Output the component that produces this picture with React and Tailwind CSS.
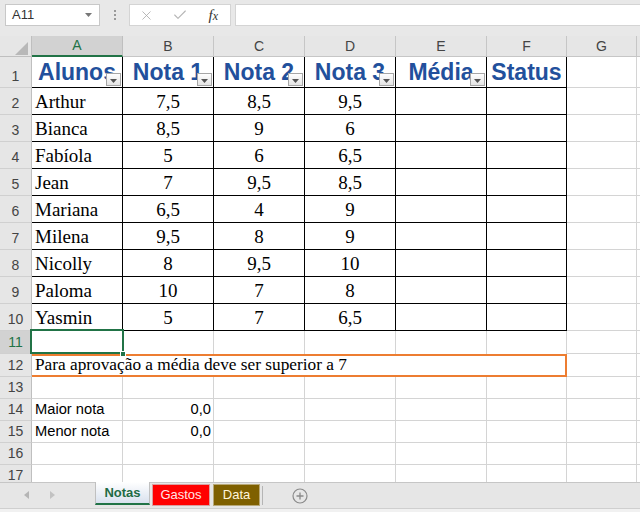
import React from "react";
import { X, Check } from "lucide-react";

const SANS = "font-['Liberation_Sans',Arial,sans-serif]";
const SERIF = "font-['Liberation_Serif','Times_New_Roman',serif]";

const data = [
  ["Arthur", "7,5", "8,5", "9,5"],
  ["Bianca", "8,5", "9", "6"],
  ["Fabíola", "5", "6", "6,5"],
  ["Jean", "7", "9,5", "8,5"],
  ["Mariana", "6,5", "4", "9"],
  ["Milena", "9,5", "8", "9"],
  ["Nicolly", "8", "9,5", "10"],
  ["Paloma", "10", "7", "8"],
  ["Yasmin", "5", "7", "6,5"],
];

const WA = "w-[91px]";
const WF = "w-[80px]";
const WG = "w-[70px]";

function RowHead({ n, sel }) {
  return (
    <div
      className={
        "w-[32px] shrink-0 border-r border-b border-r-[#bfbfbf] border-b-[#d0d0d0] flex items-end justify-center pb-[2px] text-[14px] leading-[17px] " +
        SANS +
        (sel ? " bg-[#d2d2d2] text-[#217346]" : " bg-[#e6e6e6] text-[#444]")
      }
    >
      {n}
    </div>
  );
}

function Gray({ w, children, className = "" }) {
  return (
    <div className={w + " shrink-0 border-r border-b border-[#d4d4d4] " + className}>{children}</div>
  );
}

function FilterBtn() {
  return (
    <div className="absolute right-[1px] bottom-[1px] w-[15px] h-[13px] border border-[#a6a6a6] bg-gradient-to-b from-[#ffffff] to-[#e4e4e4] flex items-end justify-center pb-[2px]">
      <svg width="7" height="4" viewBox="0 0 7 4">
        <polygon points="0,0 7,0 3.5,4" fill="#555" />
      </svg>
    </div>
  );
}

function HeadCell({ w, text, filter }) {
  return (
    <div
      className={
        w +
        " shrink-0 relative border-r border-b border-black overflow-hidden flex items-end justify-center pb-[1px]"
      }
    >
      <span
        className={
          "text-[23px] font-bold leading-[27px] text-[#22509c] whitespace-nowrap " + SANS
        }
      >
        {text}
      </span>
      {filter && <FilterBtn />}
    </div>
  );
}

function DataCell({ w, children, left }) {
  return (
    <div
      className={
        w +
        " shrink-0 border-r border-b border-black flex items-end pb-[1px] text-[19px] leading-[22px] text-black whitespace-nowrap " +
        SERIF +
        (left ? " justify-start pl-[3px]" : " justify-center")
      }
    >
      {children}
    </div>
  );
}

export default function App() {
  return (
    <div className="w-[640px] h-[512px] overflow-hidden flex flex-col bg-white select-none">
      {/* formula bar */}
      <div className="h-[36px] shrink-0 bg-[#e8e8e8] flex items-start pt-[4px]">
        <div className="ml-[5px] w-[95px] h-[22px] bg-white border border-[#c8c8c8] flex items-center justify-between pl-[6px] pr-[7px]">
          <span className={"text-[13px] text-[#333] " + SANS}>A11</span>
          <svg width="7" height="4" viewBox="0 0 7 4">
            <polygon points="0,0 7,0 3.5,4" fill="#777" />
          </svg>
        </div>
        <div className="w-[29px] h-[22px] flex flex-col items-center justify-center gap-[2px]">
          <div className="w-[2px] h-[2px] bg-[#999]" />
          <div className="w-[2px] h-[2px] bg-[#999]" />
          <div className="w-[2px] h-[2px] bg-[#999]" />
        </div>
        <div className="w-[102px] h-[22px] bg-white border border-[#d4d4d4] flex items-center">
          <div className="w-[34px] flex justify-center">
            <X size={15} strokeWidth={1.3} color="#a9a9a9" />
          </div>
          <div className="w-[34px] flex justify-center">
            <Check size={16} strokeWidth={1.6} color="#b5b5b5" />
          </div>
          <div className={"w-[34px] flex justify-center italic text-[15px] text-[#333] " + SERIF}>
            <span>
              f<span className="text-[12px]">x</span>
            </span>
          </div>
        </div>
        <div className="ml-[4px] flex-1 h-[22px] bg-white border border-[#d4d4d4] border-r-0" />
      </div>

      {/* column headers */}
      <div className={"h-[21px] shrink-0 flex bg-[#e6e6e6] text-[14px] text-[#444] " + SANS}>
        <div className="w-[32px] shrink-0 border-r border-b border-[#bfbfbf] relative">
          <svg className="absolute left-0 top-0" width="31" height="20" viewBox="0 0 31 20">
            <polygon points="28,6 28,19 15,19" fill="#b8b8b8" />
          </svg>
        </div>
        <div className="w-[91px] shrink-0 border-r border-[#bfbfbf] border-b-2 border-b-[#217346] bg-[#d2d2d2] text-[#217346] flex items-center justify-center">
          A
        </div>
        {["B", "C", "D", "E"].map((c) => (
          <div key={c} className="w-[91px] shrink-0 border-r border-b border-[#c6c6c6] flex items-center justify-center">
            {c}
          </div>
        ))}
        <div className="w-[80px] shrink-0 border-r border-b border-[#c6c6c6] flex items-center justify-center">F</div>
        <div className="w-[70px] shrink-0 border-r border-b border-[#c6c6c6] flex items-center justify-center">G</div>
        <div className="flex-1 border-b border-[#c6c6c6]" />
      </div>

      {/* grid */}
      <div className="flex-1 overflow-hidden">
        {/* row 1 */}
        <div className="h-[31px] flex">
          <RowHead n="1" />
          <HeadCell w={WA} text="Alunos" filter />
          <HeadCell w={WA} text="Nota 1" filter />
          <HeadCell w={WA} text="Nota 2" filter />
          <HeadCell w={WA} text="Nota 3" filter />
          <HeadCell w={WA} text="Média" filter />
          <HeadCell w={WF} text="Status" />
          <Gray w={WG} />
          <Gray w="flex-1" className="border-r-0" />
        </div>

        {data.map((r, i) => (
          <div key={i} className="h-[27px] flex">
            <RowHead n={String(i + 2)} />
            <DataCell w={WA} left>
              {r[0]}
            </DataCell>
            <DataCell w={WA}>{r[1]}</DataCell>
            <DataCell w={WA}>{r[2]}</DataCell>
            <DataCell w={WA}>{r[3]}</DataCell>
            <DataCell w={WA} />
            <DataCell w={WF} />
            <Gray w={WG} />
            <Gray w="flex-1" className="border-r-0" />
          </div>
        ))}

        {/* row 11 */}
        <div className="h-[23px] flex">
          <RowHead n="11" sel />
          <div className="w-[91px] shrink-0 border-r border-[#d4d4d4] relative">
            <div className="absolute -left-[2px] -top-[2px] w-[94px] h-[25px] border-2 border-[#217346] z-10" />
            <div className="absolute -right-[4px] bottom-[-3px] w-[6px] h-[6px] bg-[#217346] border border-white z-20" />
          </div>
          <div className="w-[91px] shrink-0 border-r border-[#d4d4d4]" />
          <div className="w-[91px] shrink-0 border-r border-[#d4d4d4]" />
          <div className="w-[91px] shrink-0 border-r border-[#d4d4d4]" />
          <div className="w-[91px] shrink-0 border-r border-[#d4d4d4]" />
          <div className="w-[80px] shrink-0 border-r border-[#d4d4d4]" />
          <Gray w={WG} />
          <Gray w="flex-1" className="border-r-0" />
        </div>

        {/* row 12 merged */}
        <div className="h-[23px] flex">
          <RowHead n="12" />
          <div
            className={
              "w-[535px] shrink-0 border-2 border-l-0 border-[#ed7d31] flex items-end pl-[3px] pb-[0px] text-[17.3px] leading-[20px] text-black whitespace-nowrap " +
              SERIF
            }
          >
            Para aprovação a média deve ser superior a 7
          </div>
          <Gray w={WG} />
          <Gray w="flex-1" className="border-r-0" />
        </div>

        {/* rows 13-17 */}
        {[13, 14, 15, 16, 17].map((n) => (
          <div key={n} className="h-[22px] flex">
            <RowHead n={String(n)} />
            <Gray w={WA} className={"flex items-end pl-[3px] pb-[2px] text-[14.7px] leading-[17px] text-black " + SANS}>
              {n === 14 ? "Maior nota" : n === 15 ? "Menor nota" : ""}
            </Gray>
            <Gray w={WA} className={"flex items-end justify-end pr-[2px] pb-[2px] text-[14.7px] leading-[17px] text-black " + SANS}>
              {n === 14 || n === 15 ? "0,0" : ""}
            </Gray>
            <Gray w={WA} />
            <Gray w={WA} />
            <Gray w={WA} />
            <Gray w={WF} />
            <Gray w={WG} />
            <Gray w="flex-1" className="border-r-0" />
          </div>
        ))}
      </div>

      {/* sheet tabs */}
      <div className={"h-[26px] shrink-0 bg-[#e6e6e6] border-t border-[#c6c6c6] flex items-start " + SANS}>
        <div className="w-[95px] h-[24px] flex items-center">
          <svg className="ml-[24px]" width="5" height="8" viewBox="0 0 5 8">
            <polygon points="5,0 5,8 0,4" fill="#b5b5b5" />
          </svg>
          <svg className="ml-[21px]" width="5" height="8" viewBox="0 0 5 8">
            <polygon points="0,0 0,8 5,4" fill="#c2c2c2" />
          </svg>
        </div>
        <div className="w-[55px] h-[23px] -mt-[1px] bg-gradient-to-b from-[#ffffff] to-[#d9e1ee] border-l border-r border-[#c0c0c0] border-b-2 border-b-[#217346] flex items-center justify-center pt-[1px] text-[13px] font-bold text-[#1e6b45]">
          Notas
        </div>
        <div className="ml-[2px] mt-[1px] w-[58px] h-[22px] bg-[#ff0000] border border-[#d9a0a0] flex items-center justify-center text-[13px] text-[#ffe6e6]">
          Gastos
        </div>
        <div className="ml-[3px] mt-[1px] w-[47px] h-[22px] bg-[#7f6000] border border-[#b8a878] flex items-center justify-center text-[13px] text-[#fff5dc]">
          Data
        </div>
        <div className="ml-[2px] mt-[3px] w-[1px] h-[19px] bg-[#b5b5b5]" />
        <div className="ml-[29px] mt-[4px] h-[18px] flex items-center">
          <svg width="16" height="16" viewBox="0 0 16 16">
            <circle cx="8" cy="8" r="7" fill="none" stroke="#8a8a8a" strokeWidth="1.2" />
            <path d="M8 4.5v7M4.5 8h7" stroke="#8a8a8a" strokeWidth="1.3" />
          </svg>
        </div>
      </div>
      <div className="h-[4px] shrink-0 bg-[#f1f1f1] border-t border-[#cfcfcf]" />
    </div>
  );
}
